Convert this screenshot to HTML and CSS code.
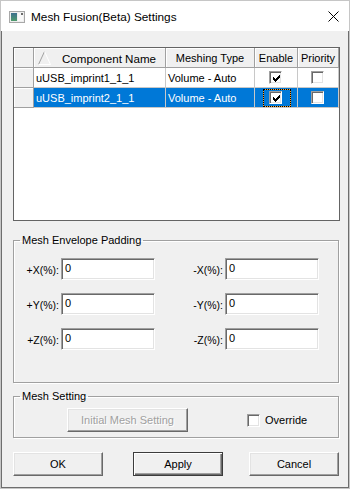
FILE: index.html
```
<!DOCTYPE html>
<html>
<head>
<meta charset="utf-8">
<link rel="stylesheet" href="styles.css">
</head>
<body>
<div class="window">
  <div class="titlebar">
    <svg class="appicon" width="16" height="12" viewBox="0 0 16 12">
      <defs>
        <linearGradient id="g" x1="0" y1="0" x2="0" y2="1">
          <stop offset="0" stop-color="#3d6f8e"/>
          <stop offset="1" stop-color="#4f9b6c"/>
        </linearGradient>
      </defs>
      <rect x="0.5" y="0.5" width="15" height="11" fill="#eeeeee" stroke="#a8a8a8"/>
      <rect x="2" y="2" width="6" height="8" fill="url(#g)"/>
      <rect x="9" y="2" width="5" height="8" fill="#f8f8f8"/>
      <rect x="12" y="2" width="2" height="2" fill="#6a6a6a"/>
    </svg>
    <span class="title">Mesh Fusion(Beta) Settings</span>
    <svg class="close" width="11" height="11" viewBox="0 0 11 11">
      <path d="M0.5 0.5 L10.5 10.5 M10.5 0.5 L0.5 10.5" stroke="#000" stroke-width="1" fill="none"/>
    </svg>
  </div>
  <div class="client">
    <div class="grid">
      <div class="table">
        <div class="hcell corner"></div>
        <div class="hcell name">
          <svg class="sort" width="13" height="14" viewBox="0 0 13 14">
            <path d="M0.5 13.5 L6.5 0.5" stroke="#a0a0a0" fill="none"/>
            <path d="M6.5 0.5 L12.5 13.5 L0.5 13.5" stroke="#ffffff" fill="none"/>
          </svg>
          <span>Component Name</span>
        </div>
        <div class="hcell">Meshing Type</div>
        <div class="hcell">Enable</div>
        <div class="hcell">Priority</div>

        <div class="rhead"></div>
        <div class="cell text">uUSB_imprint1_1_1</div>
        <div class="cell text">Volume - Auto</div>
        <div class="cell chk"><span class="cb"><svg width="9" height="9" viewBox="2 2 9 9"><path d="M9 3h1v1h-1zM8 4h2v1h-2zM3 5h1v1h-1zM7 5h3v1h-3zM3 6h2v1h-2zM6 6h3v1h-3zM3 7h5v1h-5zM4 8h3v1h-3zM5 9h1v1h-1z" fill="#000"/></svg></span></div>
        <div class="cell chk"><span class="cb"></span></div>

        <div class="rhead"></div>
        <div class="cell text sel">uUSB_imprint2_1_1</div>
        <div class="cell text sel">Volume - Auto</div>
        <div class="cell chk sel"><span class="focus"></span><span class="cb"><svg width="9" height="9" viewBox="2 2 9 9"><path d="M9 3h1v1h-1zM8 4h2v1h-2zM3 5h1v1h-1zM7 5h3v1h-3zM3 6h2v1h-2zM6 6h3v1h-3zM3 7h5v1h-5zM4 8h3v1h-3zM5 9h1v1h-1z" fill="#000"/></svg></span></div>
        <div class="cell chk sel"><span class="cb"></span></div>
      </div>
    </div>

    <fieldset class="group envelope">
      <legend>Mesh Envelope Padding</legend>
      <div class="fields">
        <label class="flabel">+X(%):</label><div class="tb">0</div>
        <label class="flabel">-X(%):</label><div class="tb">0</div>
        <label class="flabel">+Y(%):</label><div class="tb">0</div>
        <label class="flabel">-Y(%):</label><div class="tb">0</div>
        <label class="flabel">+Z(%):</label><div class="tb">0</div>
        <label class="flabel">-Z(%):</label><div class="tb">0</div>
      </div>
    </fieldset>

    <fieldset class="group meshset">
      <legend>Mesh Setting</legend>
      <div class="msrow">
        <div class="btn disabled">Initial Mesh Setting</div>
        <div class="override"><span class="cb"></span><span>Override</span></div>
      </div>
    </fieldset>

    <div class="buttons">
      <div class="btn">OK</div>
      <div class="btn default">Apply</div>
      <div class="btn">Cancel</div>
    </div>
  </div>
</div>
</body>
</html>
```
FILE: styles.css
```
* { box-sizing: border-box; }
html, body { margin: 0; padding: 0; background: #f0f0f0; }
body {
  font-family: "Liberation Sans", Arial, sans-serif;
  font-size: 11px;
  color: #000;
}
.window {
  width: 350px;
  height: 489px;
  border: 1px solid #c6c6c6;
  display: flex;
  flex-direction: column;
  background: #fff;
}
.titlebar {
  height: 30px;
  flex: none;
  background: #fff;
  display: flex;
  align-items: center;
  padding-left: 8px;
  padding-right: 10px;
}
.appicon { flex: none; margin-top: 1px; }
.title {
  margin-left: 6px;
  font-size: 11.8px;
  flex: 1;
  padding-top: 1px;
}
.close { flex: none; margin-top: 1px; }
.client {
  flex: 1;
  background: #f0f0f0;
  border: 1px solid #6e6e6e;
  border-top: none;
  padding: 16px 0 0 11px;
  display: flex;
  flex-direction: column;
}

/* grid */
.grid {
  width: 327px;
  height: 174px;
  border: 1px solid #646464;
  background: #fff;
  flex: none;
}
.table {
  display: grid;
  grid-template-columns: 20px 132px 89px 43px 41px;
  grid-auto-rows: 20px;
}
.hcell {
  background: #f0f0f0;
  border-right: 1px solid #a0a0a0;
  border-bottom: 1px solid #a0a0a0;
  box-shadow: inset 1px 1px 0 #fff;
  display: flex;
  align-items: center;
  justify-content: center;
  font-size: 11px;
  padding-top: 1px;
  white-space: nowrap;
}
.hcell.name { justify-content: flex-start; padding-left: 4px; }
.hcell.name span { flex: 1; text-align: center; padding-left: 2px; font-size: 11.6px; }
.sort { flex: none; margin-top: -1px; }
.rhead {
  background: #f0f0f0;
  border-right: 1px solid #a0a0a0;
  border-bottom: 1px solid #a0a0a0;
  box-shadow: inset 1px 1px 0 #fff;
}
.cell {
  border-right: 1px solid #c8c8c8;
  border-bottom: 1px solid #c8c8c8;
  display: flex;
  align-items: center;
  white-space: nowrap;
  position: relative;
}
.cell.text { padding-left: 2px; font-size: 11px; padding-top: 1px; }
.cell.chk { justify-content: center; padding-right: 1px; }
.cell.sel { background: #0078d7; color: #fff; }
.focus {
  position: absolute;
  left: 8px; right: 6px; top: 1px; bottom: 0;
  border: 1px solid #f0a030;
}
.focus::after {
  content: "";
  position: absolute;
  inset: -1px;
  border: 1px dotted #000;
}
.cb {
  width: 13px;
  height: 13px;
  flex: none;
  background: #fff;
  border: 1px solid;
  border-color: #a0a0a0 #fff #fff #a0a0a0;
  box-shadow: inset 1px 1px 0 #696969, inset -1px -1px 0 #e3e3e3;
  display: flex;
  align-items: center;
  justify-content: center;
  position: relative;
}
.cb svg { display: block; shape-rendering: crispEdges; margin: 1px 0 0 1px; }

/* group boxes */
.group {
  margin: 0;
  padding: 0;
  border: 1px solid #a0a0a0;
  box-shadow: 1px 1px 0 #fff, inset 1px 1px 0 #fff;
  width: 326px;
  min-width: 0;
  flex: none;
}
.group legend {
  margin-left: 6px;
  padding: 0 2px;
  line-height: 13px;
  font-size: 11px;
}
.envelope { margin-top: 13px; height: 149px; padding-top: 11px; }
.fields {
  display: grid;
  grid-template-columns: 45px 94px 66px 94px;
  column-gap: 2px;
  row-gap: 13px;
  grid-auto-rows: 22px;
  align-items: center;
}
.flabel { text-align: right; font-size: 10.5px; padding-top: 1px; }
.tb {
  height: 22px;
  background: #fff;
  border: 1px solid;
  border-color: #a0a0a0 #fff #fff #a0a0a0;
  box-shadow: inset 1px 1px 0 #696969, inset -1px -1px 0 #e3e3e3;
  padding: 3px 0 0 3px;
  font-size: 11px;
}
.meshset { margin-top: 7px; height: 48px; padding: 5px 0 0 0; }
.msrow { display: flex; align-items: center; padding-left: 53px; }
.override { display: flex; align-items: center; margin-left: 59px; gap: 5px; font-size: 11px; }

/* buttons */
.btn {
  height: 24px;
  background: #f0f0f0;
  border: 1px solid;
  border-color: #fff #696969 #696969 #fff;
  box-shadow: inset -1px -1px 0 #a0a0a0, inset 1px 1px 0 #e3e3e3;
  display: flex;
  align-items: center;
  justify-content: center;
  font-size: 11px;
}
.btn.disabled {
  width: 121px;
  color: #a0a0a0;
  text-shadow: 1px 1px 0 #fff;
}
.btn.default {
  border: 1px solid #3c3c3c;
  box-shadow: inset 1px 1px 0 #fff, inset -1px -1px 0 #696969, inset -2px -2px 0 #a0a0a0;
}
.buttons {
  margin-top: 14px;
  width: 326px;
  display: flex;
  justify-content: space-between;
}
.buttons .btn { width: 90px; }
.buttons .btn.default { margin-left: 30px; margin-right: 26px; }
```
